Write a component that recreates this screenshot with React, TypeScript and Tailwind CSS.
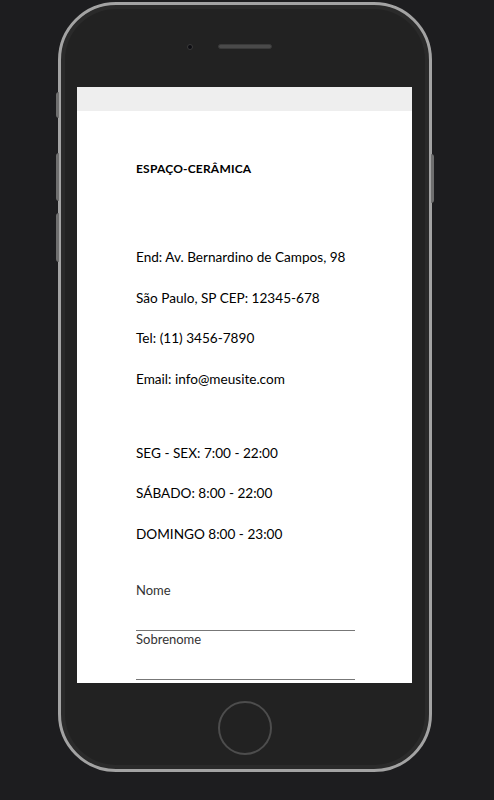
const FONT = { fontFamily: 'Lato, "Noto Sans", sans-serif' };

const infoLines = [
  'End: Av. Bernardino de Campos, 98',
  'São Paulo, SP CEP: 12345-678',
  'Tel: (11) 3456-7890',
  'Email: info@meusite.com',
];

const hours = ['SEG - SEX: 7:00 - 22:00', 'SÁBADO: 8:00 - 22:00', 'DOMINGO 8:00 - 23:00'];

function Field({ label }: { label: string }) {
  return (
    <div className="flex flex-col">
      <label className="text-[13px] leading-[16px] text-[#333]">{label}</label>
      <div className="h-[33px] border-b border-[#777]" />
    </div>
  );
}

export default function App() {
  return (
    <div className="w-[494px] h-[800px] bg-[#1d1d1f] overflow-hidden" style={FONT}>
      <div className="relative ml-[58px] mt-[2px] w-[374px] h-[770px] rounded-[58px] border-[3px] border-[#a3a3a3] bg-[#222] shadow-[inset_0_0_0_4px_#2a2a2a]">
        {/* side buttons */}
        <div className="absolute left-[-5px] top-[87px] w-[3px] h-[26px] rounded-l-sm bg-[#6f6f6f]" />
        <div className="absolute left-[-5px] top-[148px] w-[3px] h-[48px] rounded-l-sm bg-[#6f6f6f]" />
        <div className="absolute left-[-5px] top-[208px] w-[3px] h-[49px] rounded-l-sm bg-[#6f6f6f]" />
        <div className="absolute right-[-5px] top-[149px] w-[3px] h-[49px] rounded-r-sm bg-[#6f6f6f]" />

        <div className="flex flex-col">
          {/* camera + speaker */}
          <div className="h-[82px] w-full flex items-center justify-center pt-[1px]">
            <div className="w-[6px] h-[6px] rounded-full bg-[#0d0d12] border border-[#3a3a3a]" />
            <div className="w-[25px]" />
            <div className="w-[54px] h-[5px] rounded-full bg-[#4a4a4a] border border-[#3a3a3a]" />
            <div className="w-[31px]" />
          </div>

          {/* screen */}
          <div className="ml-[16px] w-[335px] h-[596px] bg-white overflow-hidden flex flex-col">
            <div className="h-[24px] shrink-0 bg-[#eeeeee]" />
            <div className="pl-[59px] pr-[57px] pt-[51px] text-black">
              <h1 className="text-[12px] font-bold leading-[14px] tracking-[0.2px]">ESPAÇO-CERÂMICA</h1>
              <div className="mt-[74px] flex flex-col gap-[25.5px]">
                {infoLines.map(l => (
                  <p key={l} className="text-[13.6px] leading-[15px]">{l}</p>
                ))}
              </div>
              <div className="mt-[59px] flex flex-col gap-[25.5px]">
                {hours.map(l => (
                  <p key={l} className="text-[13.6px] leading-[15px]">{l}</p>
                ))}
              </div>
              <div className="mt-[40px] flex flex-col">
                <Field label="Nome" />
                <Field label="Sobrenome" />
              </div>
            </div>
          </div>

          {/* home button */}
          <div className="mt-[18px] self-center w-[54px] h-[54px] rounded-full border-2 border-[#4d4d4d] bg-[#222]" />
        </div>
      </div>
    </div>
  );
}
